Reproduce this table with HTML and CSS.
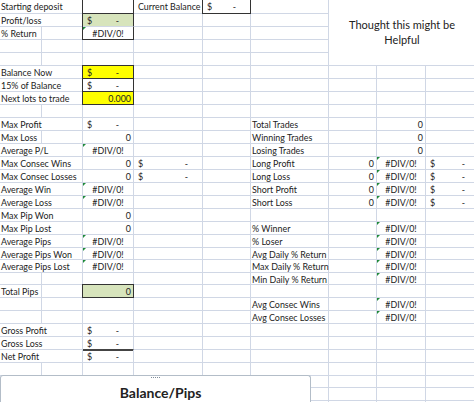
FILE: index.html
```html
<!DOCTYPE html>
<html>
<head>
<meta charset="utf-8">
<link rel="stylesheet" href="styles.css">
</head>
<body>
<div class="wrap">
<div class="sheet">
<div class="w2">Starting deposit</div><i class="dl dr db"></i><div class="ind">Current Balance</div><div class="acc dl dr db"><span>$</span><span>-</span></div><i></i><div class="merge">Thought this might be<br>Helpful</div>
<div class="w2">Profit/loss</div><div class="acc green dl dr"><span>$</span><span>-</span></div><i></i><i></i><i></i>
<div>% Return</div><i></i><div class="e t dl dr db">#DIV/0!</div><i></i><i></i><i></i>
<i></i><i></i><i></i><i></i><i></i><i></i>
<i></i><i></i><i></i><i></i><i></i><i></i>
<div class="w2">Balance Now</div><div class="acc yellow box"><span>$</span><span>-</span></div><i></i><i></i><i></i><i></i><i></i><i></i>
<div class="w2">15% of Balance</div><div class="acc dl dr db"><span>$</span><span>-</span></div><i></i><i></i><i></i><i></i><i></i><i></i>
<div class="w2">Next lots to trade</div><div class="n yellow dl dr db">0.000</div><i></i><i></i><i></i><i></i><i></i><i></i>
<i></i><i></i><i></i><i></i><i></i><i></i><i></i><i></i><i></i>
<div class="w2">Max Profit</div><div class="acc"><span>$</span><span>-</span></div><i></i><i></i><div>Total Trades</div><i></i><div class="n">0</div><i></i>
<div>Max Loss</div><i></i><div class="n">0</div><i></i><i></i><div>Winning Trades</div><i></i><div class="n">0</div><i></i>
<div class="w2">Average P/L</div><div class="e t">#DIV/0!</div><i></i><i></i><div>Losing Trades</div><i></i><div class="n">0</div><i></i>
<div class="w2">Max Consec Wins</div><div class="n">0</div><div class="acc"><span>$</span><span>-</span></div><i></i><div>Long Profit</div><div class="n">0</div><div class="e t">#DIV/0!</div><div class="acc"><span>$</span><span>-</span></div>
<div class="w2">Max Consec Losses</div><div class="n">0</div><div class="acc"><span>$</span><span>-</span></div><i></i><div>Long Loss</div><div class="n">0</div><div class="e t">#DIV/0!</div><div class="acc"><span>$</span><span>-</span></div>
<div class="w2">Average Win</div><div class="e t">#DIV/0!</div><i></i><i></i><div>Short Profit</div><div class="n">0</div><div class="e t">#DIV/0!</div><div class="acc"><span>$</span><span>-</span></div>
<div class="w2">Average Loss</div><div class="e t">#DIV/0!</div><i></i><i></i><div>Short Loss</div><div class="n">0</div><div class="e t">#DIV/0!</div><div class="acc"><span>$</span><span>-</span></div>
<div class="w2">Max Pip Won</div><div class="n">0</div><i></i><i></i><i></i><i></i><i></i><i></i>
<div class="w2">Max Pip Lost</div><div class="n">0</div><i></i><i></i><div>% Winner</div><i></i><div class="e t">#DIV/0!</div><i></i>
<div class="w2">Average Pips</div><div class="e t">#DIV/0!</div><i></i><i></i><div>% Loser</div><i></i><div class="e t">#DIV/0!</div><i></i>
<div class="w2">Average Pips Won</div><div class="e t">#DIV/0!</div><i></i><i></i><div>Avg Daily % Return</div><i></i><div class="e t">#DIV/0!</div><i></i>
<div class="w2">Average Pips Lost</div><div class="e t">#DIV/0!</div><i></i><i></i><div>Max Daily % Return</div><i></i><div class="e t">#DIV/0!</div><i></i>
<i></i><i></i><i></i><i></i><i></i><div>Min Daily % Return</div><i></i><div class="e t">#DIV/0!</div><i></i>
<div>Total Pips</div><i></i><div class="n green box">0</div><i></i><i></i><i></i><i></i><i></i><i></i>
<i></i><i></i><i></i><i></i><i></i><div>Avg Consec Wins</div><i></i><div class="e t">#DIV/0!</div><i></i>
<i></i><i></i><i></i><i></i><i></i><div>Avg Consec Losses</div><i></i><div class="e t">#DIV/0!</div><i></i>
<div class="w2">Gross Profit</div><div class="acc"><span>$</span><span>-</span></div><i></i><i></i><i></i><i></i><i></i><i></i>
<div class="w2">Gross Loss</div><div class="acc thick"><span>$</span><span>-</span></div><i></i><i></i><i></i><i></i><i></i><i></i>
<div class="w2">Net Profit</div><div class="acc"><span>$</span><span>-</span></div><i></i><i></i><i></i><i></i><i></i><i></i>
<i></i><i></i><i></i><i></i><i></i><i></i><i></i><i></i><i></i>
<i></i><i></i><i></i><i></i><i></i><i></i><i></i><i></i><i></i>
<i></i><i></i><i></i><i></i><i></i><i></i><i></i><i></i><i></i>
<i></i><i></i><i></i><i></i><i></i><i></i><i></i><i></i><i></i>
</div>
<div class="chart">
<div class="chart-title">Balance/Pips</div>
</div>
</div>
</body>
</html>
```
FILE: styles.css
```css
:root {
  --grid: #d0d7e5;
  --dark: #333333;
  --ink: #222222;
}
html, body {
  margin: 0;
  padding: 0;
  overflow: hidden;
  background: #ffffff;
}
.wrap {
  position: relative;
  width: 474px;
  height: 402px;
  overflow: hidden;
}
.sheet {
  display: grid;
  grid-template-columns: 42px 41px 51px 69px 48px 78px 48px 49px 54px;
  grid-template-rows: 14px repeat(18, 13px) 12px 13px 12px repeat(7, 13px) 12px 13px 13px;
  width: 480px;
  font-family: Lato, "Open Sans", sans-serif;
  font-size: 8.9px;
  color: var(--ink);
}
.sheet > i,
.sheet > div {
  display: block;
  font-style: normal;
  border-right: 1px solid var(--grid);
  border-bottom: 1px solid var(--grid);
  padding: 1px 2px 0 1px;
  line-height: 12px;
  white-space: nowrap;
  min-width: 0;
}
.sheet > .w2 {
  grid-column: span 2;
}
.sheet > .ind {
  padding-left: 4px;
}
.sheet > .n {
  text-align: right;
  padding-right: 2px;
}
.sheet > .e {
  text-align: center;
  padding-left: 0;
  padding-right: 0;
}
.sheet > .acc {
  display: flex;
  justify-content: space-between;
  padding-left: 4px;
  padding-right: 14px;
}
.t {
  position: relative;
}
.t::before {
  content: "";
  position: absolute;
  left: 0;
  top: 0;
  width: 0;
  height: 0;
  border-top: 3px solid #1f8a3a;
  border-right: 3px solid transparent;
}
.sheet > .dr { border-right-color: var(--dark); }
.sheet > .db { border-bottom-color: var(--dark); }
.dl { box-shadow: -1px 0 0 var(--dark); }
.sheet > .box {
  border-right-color: var(--dark);
  border-bottom-color: var(--dark);
  box-shadow: -1px 0 0 var(--dark), 0 -1px 0 var(--dark), -1px -1px 0 var(--dark);
}
.sheet > .thick {
  border-bottom-color: #444444;
  box-shadow: 0 1px 0 #444444;
}
.green { background: #d7e4bc; }
.yellow { background: #ffff00; }
.sheet > .merge {
  grid-column: 7 / 10;
  grid-row: 1 / 6;
  display: flex;
  align-items: center;
  justify-content: center;
  text-align: center;
  white-space: normal;
  font-size: 11px;
  line-height: 15px;
  padding: 0 4px 1px 0;
}
.chart {
  position: absolute;
  left: 0;
  top: 375px;
  width: 311px;
  height: 40px;
  background: #ffffff;
  border: 1px solid #b3bdc8;
  border-bottom: none;
  border-radius: 3px 3px 0 0;
  box-sizing: border-box;
  font-family: Lato, "Open Sans", sans-serif;
}
.chart::before {
  content: "";
  position: absolute;
  top: 1px;
  left: 150px;
  width: 9px;
  border-top: 1px dotted #7f8c99;
}
.chart-title {
  padding: 8px 0 0 10px;
  text-align: center;
  font-weight: 700;
  font-size: 14px;
  line-height: 17px;
  color: var(--ink);
}
```
